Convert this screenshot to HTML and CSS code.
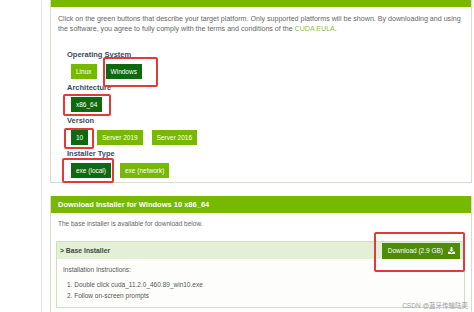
FILE: index.html
```html
<!DOCTYPE html>
<html lang="en">
<head>
    <meta charset="UTF-8">
    <meta name="viewport" content="width=device-width, initial-scale=1.0">
    <title>CUDA Toolkit Downloads</title>
    <link rel="stylesheet" href="styles.css">
</head>
<body>
    <div class="page">
        <div class="rail"></div>
        <div class="main">
            <div class="panel">
                <div class="panel-bar"></div>
                <div class="panel-body">
                    <p class="intro">Click on the green buttons that describe your target platform. Only supported platforms will be shown. By downloading and using the software, you agree to fully comply with the terms and conditions of the <a href="#">CUDA EULA</a>.</p>
                    <div class="options">
                        <div class="group">
                            <div class="group-label">Operating System</div>
                            <div class="btn-row">
                                <span class="opt">Linux</span>
                                <span class="opt on">Windows<span class="mark mark-os"></span></span>
                            </div>
                        </div>
                        <div class="group">
                            <div class="group-label">Architecture</div>
                            <div class="btn-row">
                                <span class="opt on">x86_64<span class="mark mark-arch"></span></span>
                            </div>
                        </div>
                        <div class="group">
                            <div class="group-label">Version</div>
                            <div class="btn-row">
                                <span class="opt on">10<span class="mark mark-ver"></span></span>
                                <span class="opt">Server 2019</span>
                                <span class="opt">Server 2016</span>
                            </div>
                        </div>
                        <div class="group">
                            <div class="group-label">Installer Type</div>
                            <div class="btn-row">
                                <span class="opt on">exe (local)<span class="mark mark-type"></span></span>
                                <span class="opt">exe (network)</span>
                            </div>
                        </div>
                    </div>
                </div>
            </div>

            <div class="panel panel-download">
                <div class="panel-head">Download Installer for Windows 10 x86_64</div>
                <div class="panel-content">
                    <p class="note">The base installer is available for download below.</p>
                    <div class="base">
                        <div class="base-head">
                            <span class="base-title"><span class="chev">&gt;</span> Base Installer</span>
                            <a class="dl-btn" href="#">Download (2.9 GB)
                                <svg class="dl-icon" viewBox="0 0 16 16" width="7" height="7">
                                    <polygon points="6,0 10,0 10,6 13,6 8,11 3,6 6,6" fill="#fff"/>
                                    <polygon points="0,11 5,11 8,14 11,11 16,11 16,16 0,16" fill="#fff"/>
                                </svg>
                                <span class="mark mark-dl"></span>
                            </a>
                        </div>
                        <div class="base-body">
                            <p class="steps-title">Installation Instructions:</p>
                            <ol class="steps">
                                <li>Double click cuda_11.2.0_460.89_win10.exe</li>
                                <li>Follow on-screen prompts</li>
                            </ol>
                        </div>
                    </div>
                </div>
            </div>
        </div>
    </div>
    <div class="watermark">CSDN @蓝牙传输陆奕</div>
</body>
</html>
```

FILE: styles.css
```css
body {
    font-family: "Liberation Sans", Arial, sans-serif;
    margin: 0;
    padding: 0;
    background-color: #fff;
    width: 474px;
    height: 312px;
    overflow: hidden;
    position: relative;
}

.page {
    display: flex;
    height: 312px;
    overflow: hidden;
}

.rail {
    width: 41px;
    border-right: 1px solid #e6e6e6;
}

.main {
    flex: 1;
    padding: 0 2px 0 8px;
}

.panel {
    border: 1px solid #d8ddc9;
    border-top: none;
}

.panel-bar {
    height: 7px;
    background-color: #76b900;
}

.panel-body {
    padding: 7px 7px 0 7px;
}

.intro {
    margin: 0 0 16px;
    font-size: 7.1px;
    line-height: 10px;
    color: #666;
}

.intro a {
    color: #8bbf4c;
    text-decoration: none;
}

.options {
    padding-left: 9px;
}

.group-label {
    font-size: 7.5px;
    font-weight: bold;
    line-height: 10px;
    color: #3a4b5c;
    margin-bottom: 4px;
}

.btn-row {
    display: flex;
    gap: 9px;
    padding-left: 4px;
    margin-bottom: 4px;
}

.opt {
    position: relative;
    height: 15px;
    line-height: 15px;
    padding: 0 5px;
    font-size: 6.5px;
    color: #fff;
    background-color: #76b900;
}

.opt.on {
    background-color: #0f6a0f;
}

/* red annotation boxes */
.mark {
    position: absolute;
    border: 2px solid #e23a3a;
    border-radius: 2px;
}

.mark-os {
    left: -3px;
    right: -16px;
    top: -7px;
    bottom: -8px;
}

.mark-arch {
    left: -8px;
    right: -9px;
    top: -3px;
    bottom: -4px;
}

.mark-ver {
    left: -7px;
    right: -6px;
    top: -2px;
    bottom: -4px;
}

.mark-type {
    left: -9px;
    right: -3px;
    top: -5px;
    bottom: -5px;
}

.mark-dl {
    left: -8px;
    right: -5px;
    top: -11px;
    bottom: -13px;
}

.panel-download {
    margin-top: 13px;
    height: 116px;
    overflow: hidden;
}

.panel-head {
    height: 17px;
    line-height: 17px;
    padding-left: 7px;
    background-color: #76b900;
    color: #fff;
    font-size: 7.5px;
    font-weight: bold;
}

.panel-content {
    padding: 6px 6px 0 5px;
}

.note {
    margin: 0 0 12px;
    font-size: 6.5px;
    line-height: 10px;
    color: #666;
    padding-left: 2px;
}

.base {
    border: 1px solid #cfe1b6;
    background-color: #fdfefb;
}

.base-head {
    display: flex;
    justify-content: space-between;
    align-items: center;
    height: 17px;
    padding: 0 4px 0 3px;
    background-color: #e3efd6;
}

.base-title {
    font-size: 6.8px;
    font-weight: bold;
    color: #3c4c3a;
}

.chev {
    color: #1f5a00;
}

.dl-btn {
    position: relative;
    display: flex;
    align-items: center;
    gap: 5px;
    height: 16px;
    padding: 0 5px 0 6px;
    background-color: #4d8b09;
    color: #fff;
    font-size: 6.5px;
    text-decoration: none;
}

.base-body {
    padding: 6px;
}

.steps-title {
    margin: 0 0 4px;
    font-size: 6.5px;
    line-height: 10px;
    color: #555;
}

.steps {
    margin: 0;
    padding-left: 4px;
    list-style: decimal inside;
    font-size: 6.5px;
    line-height: 11px;
    color: #555;
}

.watermark {
    position: absolute;
    right: 6px;
    bottom: 2px;
    font-family: "Liberation Sans", "Noto Sans CJK SC", sans-serif;
    font-size: 6.5px;
    color: #a0a0a0;
}
```
